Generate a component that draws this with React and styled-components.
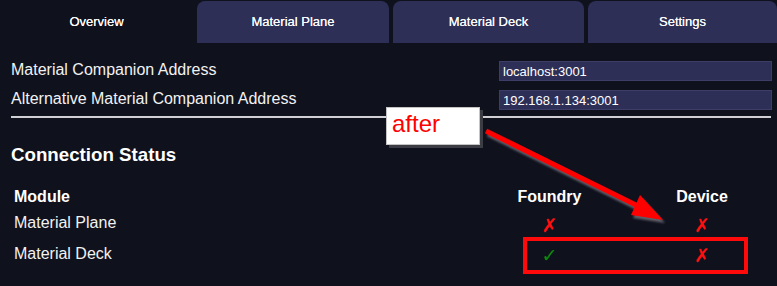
import React from 'react';
import styled, { createGlobalStyle } from 'styled-components';

const GlobalStyle = createGlobalStyle`
  html, body {
    margin: 0;
    padding: 0;
    background: #0f111d;
  }
  body {
    font-family: "Liberation Sans", Arial, sans-serif;
    color: #f2f2f2;
  }
`;

const Page = styled.div`
  position: relative;
  width: 777px;
  height: 286px;
  overflow: hidden;
  background: #0f111d;
`;

const TabBar = styled.nav`
  display: grid;
  grid-template-columns: 193px 192px 191px 1fr;
  column-gap: 4px;
  height: 42px;
  padding-top: 1px;
`;

const Tab = styled.div`
  display: flex;
  align-items: center;
  justify-content: center;
  border-radius: 8px 8px 0 0;
  background: ${p => (p.$active ? 'transparent' : '#2e2f57')};
  color: #fafafa;
  font-size: 13px;
  padding-bottom: 1px;
  text-shadow: 0 0 0.4px #fff;
`;

const Content = styled.div`
  padding: 0 5px 0 11px;
`;

const Settings = styled.div`
  display: flex;
  flex-direction: column;
  gap: 9px;
  padding-top: 18px;
`;

const SettingRow = styled.div`
  display: flex;
  align-items: center;
  justify-content: space-between;
  height: 20px;
`;

const Label = styled.label`
  font-size: 16px;
  color: #f2f2f2;
  margin-top: -3px;
`;

const Field = styled.input`
  box-sizing: border-box;
  width: 273px;
  height: 20px;
  padding: 0 3px;
  background: #2e2f57;
  border: 1px solid #3c3e68;
  color: #fff;
  font-family: "Liberation Sans", Arial, sans-serif;
  font-size: 13px;
  outline: none;
`;

const Rule = styled.hr`
  height: 2px;
  margin: 6px 1px 0 0;
  border: none;
  background: #cfcfd4;
`;

const Heading = styled.h3`
  margin: 26px 0 0;
  font-size: 18.72px;
  font-weight: bold;
  color: #fff;
`;

const Table = styled.div`
  margin-top: 17px;
  padding-left: 3px;
`;

const Row = styled.div`
  display: grid;
  grid-template-columns: 1fr 165px 140px;
  align-items: center;
  height: ${p => p.$h}px;
  font-size: 16px;
  font-weight: ${p => (p.$head ? 'bold' : 'normal')};
  color: ${p => (p.$head ? '#fff' : '#f2f2f2')};
`;

const Cell = styled.div`
  text-align: ${p => (p.$center ? 'center' : 'left')};
`;

const Mark = styled.span`
  display: inline-block;
  font-family: "DejaVu Sans", sans-serif;
  font-size: 19px;
  line-height: 20px;
  margin-top: 4px;
  color: ${p => (p.$ok ? '#0b8a0b' : '#ff1010')};
`;

const Callout = styled.div`
  position: absolute;
  left: 386px;
  top: 107px;
  box-sizing: border-box;
  width: 94px;
  height: 38px;
  padding: 2px 0 0 5px;
  background: #fff;
  border: 1px solid #c4c4c4;
  box-shadow: 3px 3px 0 #3c3c44;
  color: #ff0000;
  font-size: 24px;
  line-height: 28px;
`;

const Highlight = styled.div`
  position: absolute;
  left: 523px;
  top: 237px;
  box-sizing: border-box;
  width: 225px;
  height: 37px;
  border: 4px solid #ff0a0a;
`;

const ArrowLayer = styled.svg`
  position: absolute;
  left: 0;
  top: 0;
  pointer-events: none;
  filter: drop-shadow(2px 3px 1px rgba(110, 110, 120, 0.85));
`;

const modules = [
  { name: 'Material Plane', foundry: false, device: false, h: 26 },
  { name: 'Material Deck', foundry: true, device: false, h: 35 },
];

const Status = ({ ok }) => <Mark $ok={ok}>{ok ? '✓' : '✗'}</Mark>;

const App = () => {
  return (
    <>
      <GlobalStyle />
      <Page>
        <TabBar>
          <Tab $active>Overview</Tab>
          <Tab>Material Plane</Tab>
          <Tab>Material Deck</Tab>
          <Tab>Settings</Tab>
        </TabBar>

        <Content>
          <Settings>
            <SettingRow>
              <Label>Material Companion Address</Label>
              <Field defaultValue="localhost:3001" />
            </SettingRow>
            <SettingRow>
              <Label>Alternative Material Companion Address</Label>
              <Field defaultValue="192.168.1.134:3001" />
            </SettingRow>
          </Settings>
          <Rule />

          <Heading>Connection Status</Heading>
          <Table>
            <Row $head $h={27}>
              <Cell>Module</Cell>
              <Cell $center>Foundry</Cell>
              <Cell $center>Device</Cell>
            </Row>
            {modules.map(m => (
              <Row key={m.name} $h={m.h}>
                <Cell>{m.name}</Cell>
                <Cell $center><Status ok={m.foundry} /></Cell>
                <Cell $center><Status ok={m.device} /></Cell>
              </Row>
            ))}
          </Table>
        </Content>

        <Callout>after</Callout>
        <Highlight />
        <ArrowLayer width="777" height="286" viewBox="0 0 777 286">
          <line x1="486" y1="131" x2="642" y2="208" stroke="#ff0000" strokeWidth="5" />
          <polygon points="663,220 631,215 640,195" fill="#ff0000" />
        </ArrowLayer>
      </Page>
    </>
  );
};

export default App;
